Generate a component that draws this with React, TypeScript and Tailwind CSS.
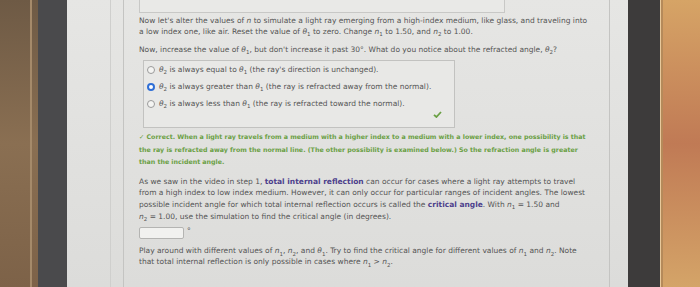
import React from 'react';

function N({ i }: { i: string }) {
  return (
    <span>
      <span className="italic">n</span>
      <sub className="text-[5.5px] align-[-1px]">{i}</sub>
    </span>
  );
}

function T({ i }: { i: string }) {
  return (
    <span>
      <span className="italic">θ</span>
      <sub className="text-[5.5px] align-[-1px]">{i}</sub>
    </span>
  );
}

function Radio({ checked }: { checked?: boolean }) {
  if (checked) {
    return <span className="inline-block w-[8px] h-[8px] rounded-full border-[2.5px] border-[#2f6fd6] bg-white shrink-0" />;
  }
  return <span className="inline-block w-[8px] h-[8px] rounded-full border border-[#9a9a9a] bg-[#f4f4f2] shrink-0" />;
}

export default function App() {
  return (
    <div className="flex w-[700px] h-[287px] overflow-hidden bg-[#7a6650] font-['DejaVu_Sans',sans-serif]">
      {/* room behind the screen, left */}
      <div className="w-[38px] h-full flex bg-gradient-to-b from-[#6e5a45] via-[#8a6f52] to-[#7d6248]">
        <div className="w-[30px] h-full" />
        <div className="w-[2px] h-full bg-[#a58a6a]" />
      </div>
      {/* bezel */}
      <div className="w-[29px] h-full bg-[#4a4a4c]" />

      {/* screen */}
      <div className="flex-1 h-full flex bg-gradient-to-b from-[#e6e6e4] to-[#dcdcda]">
        <div className="w-[43px]" />
        <div className="w-[13px] border-l border-[#cfcfcd]" />
        <div className="flex-1 border-l border-r border-[#c4c4c2] pl-[15px] pr-[4px] text-[7.5px] leading-[11px] text-[#555] whitespace-nowrap">
          <div className="w-[366px] h-[13px] border border-t-0 border-[#c8c8c6] bg-[#e9e9e7]" />

          <p className="mt-[2px]">
            Now let's alter the values of <span className="italic">n</span> to simulate a light ray emerging from a
            high-index medium, like glass, and traveling into
            <br />a low index one, like air. Reset the value of <T i="1" /> to zero. Change <N i="1" /> to 1.50, and{' '}
            <N i="2" /> to 1.00.
          </p>

          <p className="mt-[7px]">
            Now, increase the value of <T i="1" />, but don't increase it past 30°. What do you notice about the
            refracted angle, <T i="2" />?
          </p>

          <div className="relative mt-[5px] ml-[4px] w-[312px] h-[68px] border border-[#c2c2c0] bg-[#e8e8e6] pt-[0px] pl-[3px]">
            <div className="flex items-center gap-[4px] h-[17px]">
              <Radio />
              <span>
                <T i="2" /> is always equal to <T i="1" /> (the ray's direction is unchanged).
              </span>
            </div>
            <div className="flex items-center gap-[4px] h-[17px]">
              <Radio checked />
              <span>
                <T i="2" /> is always greater than <T i="1" /> (the ray is refracted away from the normal).
              </span>
            </div>
            <div className="flex items-center gap-[4px] h-[17px]">
              <Radio />
              <span>
                <T i="2" /> is always less than <T i="1" /> (the ray is refracted toward the normal).
              </span>
            </div>
            <svg className="absolute right-[12px] bottom-[9px]" width="9" height="7" viewBox="0 0 9 7">
              <path d="M1 3.8 L3.4 6 L8 1" fill="none" stroke="#6aa044" strokeWidth="1.8" />
            </svg>
          </div>

          <p className="mt-[3px] text-[6.3px] leading-[12.5px] font-bold text-[#6a9f44]">
            ✓ Correct. When a light ray travels from a medium with a higher index to a medium with a lower index, one
            possibility is that
            <br />
            the ray is refracted away from the normal line. (The other possibility is examined below.) So the refraction
            angle is greater
            <br />
            than the incident angle.
          </p>

          <p className="mt-[7px] leading-[11.7px]">
            As we saw in the video in step 1, <b className="text-[#4d3f8c]">total internal reflection</b> can occur for
            cases where a light ray attempts to travel
            <br />
            from a high index to low index medium. However, it can only occur for particular ranges of incident angles.
            The lowest
            <br />
            possible incident angle for which total internal reflection occurs is called the{' '}
            <b className="text-[#4d3f8c]">critical angle</b>. With <N i="1" /> = 1.50 and
            <br />
            <N i="2" /> = 1.00, use the simulation to find the critical angle (in degrees).
          </p>

          <div className="mt-[5px] flex items-start gap-[3px]">
            <div className="w-[45px] h-[12px] rounded-[2px] border border-[#b4b4b2] bg-[#f1f1ef]" />
            <span className="leading-[8px]">°</span>
          </div>

          <p className="mt-[6px]">
            Play around with different values of <N i="1" />, <N i="2" />, and <T i="1" />. Try to find the critical
            angle for different values of <N i="1" /> and <N i="2" />. Note
            <br />
            that total internal reflection is only possible in cases where <N i="1" /> &gt; <N i="2" />.
          </p>
        </div>
        <div className="w-[18px]" />
      </div>

      {/* bezel */}
      <div className="w-[32px] h-full bg-[#3d3b3b]" />
      {/* room behind the screen, right */}
      <div className="w-[40px] h-full flex bg-gradient-to-b from-[#d6a466] via-[#c07a55] to-[#d4a468]">
        <div className="w-[3px] h-full bg-[#b58a5a] border-l border-[#e8c89a]" />
      </div>
    </div>
  );
}
